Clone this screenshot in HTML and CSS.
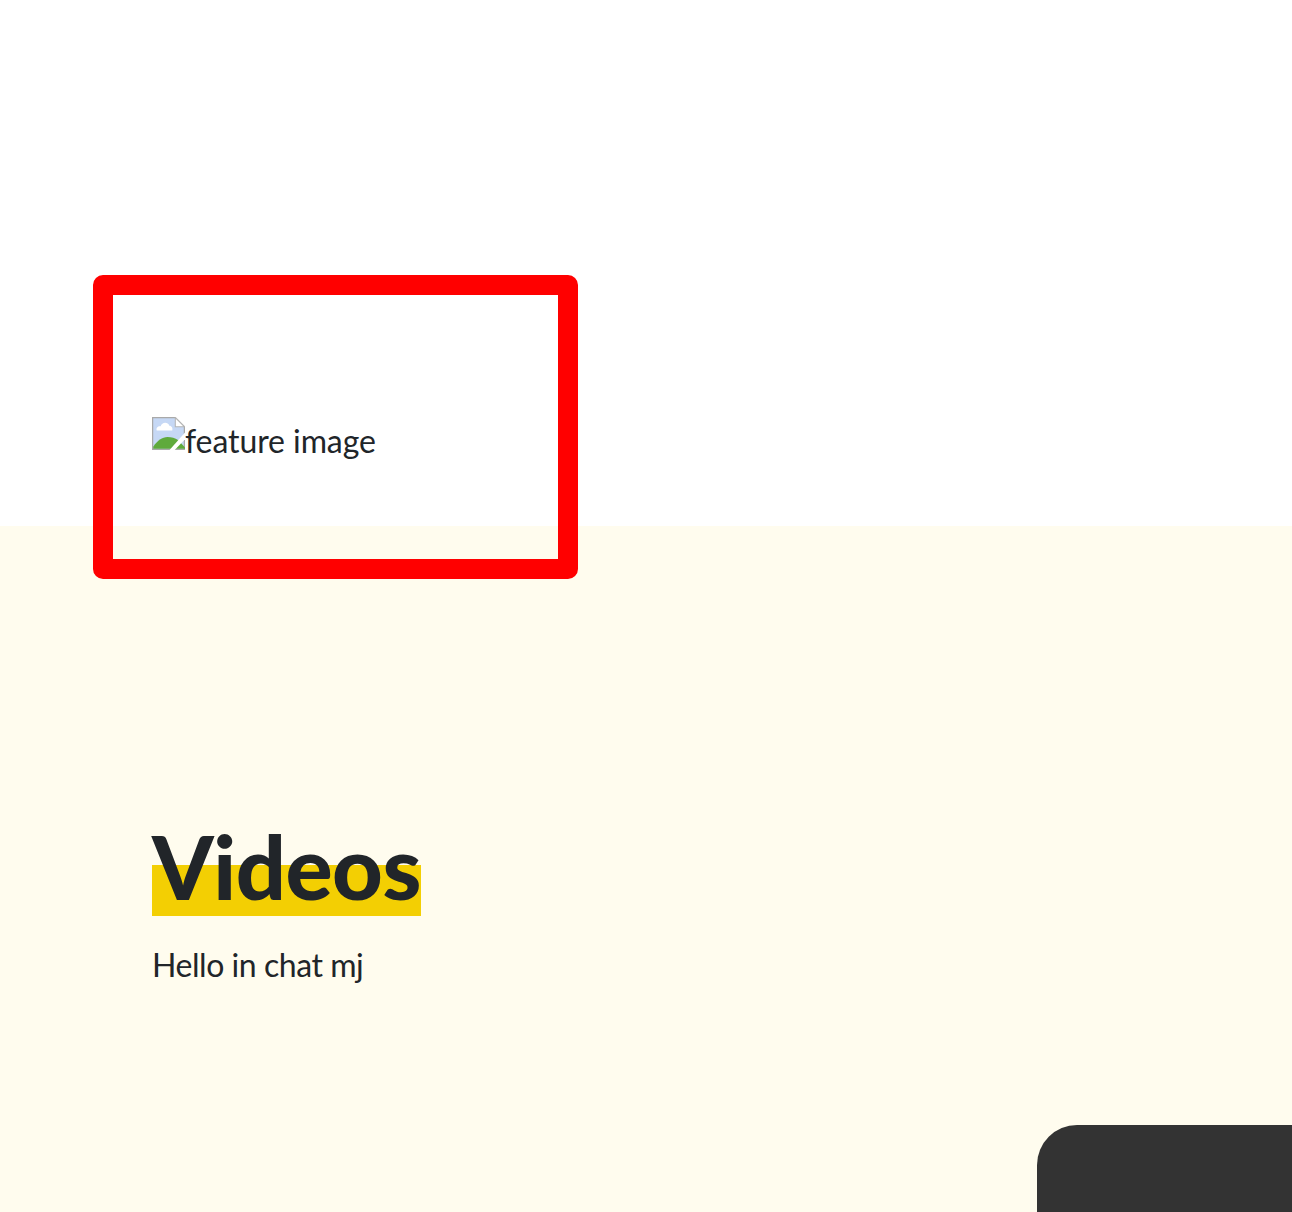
FILE: index.html
```html
<!DOCTYPE html>
<html lang="en">
<head>
    <meta charset="UTF-8">
    <meta name="viewport" content="width=device-width, initial-scale=1.0">
    <title>Videos</title>
    <link rel="stylesheet" href="styles.css">
</head>
<body>
    <div class="page">
        <section class="feature">
            <div class="feature-frame">
                <span class="feature-image">
                    <svg class="broken-icon" viewBox="0 0 16 16" aria-hidden="true">
                        <path d="M.3.3h11l4.400 4.400v11H.3z" fill="#c6d8f5" stroke="#a9a9a9" stroke-width=".6"/>
                        <path d="M11.300.3v4.400h4.400z" fill="#fff" stroke="#b5b5b5" stroke-width=".5"/>
                        <path d="M2.300 6.600c-.5-1.500.8-2.400 1.900-2.100.5-2 3.500-2.300 4.200-.3 1.200 0 1.800 1.200 1.400 2.400z" fill="#fff"/>
                        <path d="M.6 15.400v-1C2.500 11.500 5 9.700 7.500 9.700c2 0 3.700.6 5.100 1.500l4 4.200z" fill="#5faa3c"/>
                        <path d="M16 7.500L8.500 16H11l5-5.200z" fill="#fff"/>
                    </svg>feature image</span>
            </div>
        </section>
        <section class="videos">
            <h1 class="videos-title">Videos</h1>
            <p class="videos-text">Hello in chat mj</p>
        </section>
        <div class="corner-panel"></div>
    </div>
</body>
</html>
```

FILE: styles.css
```css
html, body {
    margin: 0;
    padding: 0;
}
body {
    font-family: 'Lato', sans-serif;
    color: #212529;
    background-color: #fffcee;
}
.page {
    position: relative;
    height: 1212px;
    overflow: hidden;
}
.feature {
    height: 526px;
    box-sizing: border-box;
    padding: 275px 0 0 92.5px;
    background-color: #ffffff;
}
.feature-frame {
    position: relative;
    z-index: 1;
    width: 485.5px;
    height: 304px;
    box-sizing: border-box;
    padding: 122px 0 0 39.5px;
    border: 20px solid #ff0000;
    border-radius: 10px;
}
.feature-image {
    display: flex;
    align-items: flex-start;
    font-size: 32px;
    line-height: 48px;
    letter-spacing: -0.08px;
}
.broken-icon {
    width: 33px;
    height: 33px;
    flex-shrink: 0;
}
.videos {
    padding: 285px 0 0 152px;
}
.videos-title {
    display: inline-block;
    margin: 0;
    padding-top: 6px;
    font-size: 88px;
    font-weight: 900;
    line-height: 99px;
    letter-spacing: -0.5px;
    background: linear-gradient(transparent 54px, #f3cf03 54px);
}
.videos-text {
    margin: 25px 0 0;
    font-size: 32px;
    line-height: 48px;
    letter-spacing: -0.45px;
}
.corner-panel {
    position: absolute;
    right: 0;
    bottom: 0;
    width: 255px;
    height: 87px;
    background-color: #333333;
    border-top-left-radius: 40px;
}
```
